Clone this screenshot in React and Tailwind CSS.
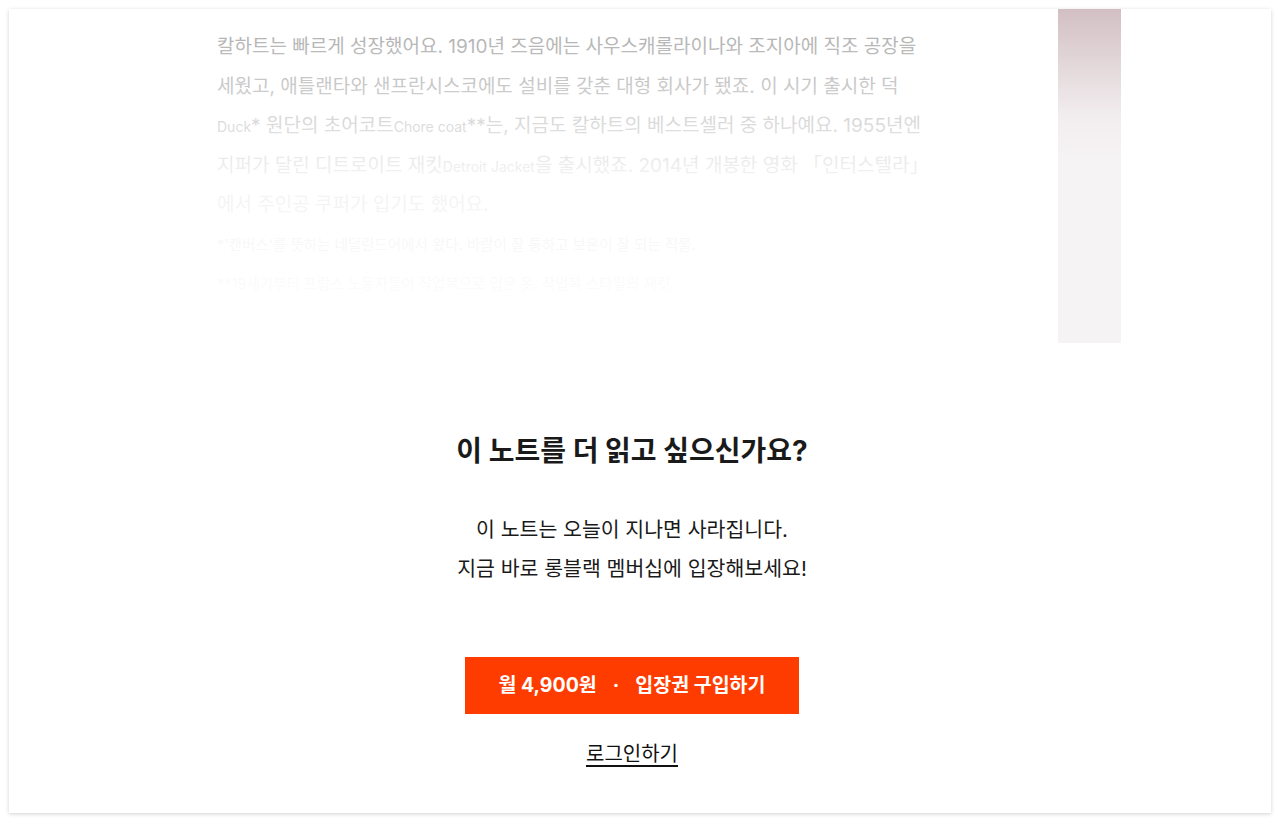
export default function App() {
  const font = "font-['Inter','Noto_Sans_CJK_KR',sans-serif]";
  return (
    <div className={`min-h-[822px] bg-white p-[9px] ${font}`}>
      <div className="h-[804px] bg-white shadow-[0_1px_4px_rgba(0,0,0,0.18)] flex flex-col">
        <div className="flex">
          <div className="relative ml-[208px] w-[712px] pt-[18px] text-[#a8a8a8]">
            <p className="text-[19px] leading-[39.5px] whitespace-nowrap">
              칼하트는 빠르게 성장했어요. 1910년 즈음에는 사우스캐롤라이나와 조지아에 직조 공장을<br />
              세웠고, 애틀랜타와 샌프란시스코에도 설비를 갖춘 대형 회사가 됐죠. 이 시기 출시한 덕<br />
              <span className="text-[14px] leading-none">Duck</span>* 원단의 초어코트<span className="text-[14px] leading-none">Chore coat</span>**는, 지금도 칼하트의 베스트셀러 중 하나예요. 1955년엔<br />
              지퍼가 달린 디트로이트 재킷<span className="text-[14px] leading-none">Detroit Jacket</span>을 출시했죠. 2014년 개봉한 영화 「인터스텔라」<br />
              에서 주인공 쿠퍼가 입기도 했어요.
            </p>
            <p className="text-[14.5px] leading-[39.5px] whitespace-nowrap">
              *'캔버스'를 뜻하는 네덜란드어에서 왔다. 바람이 잘 통하고 보온이 잘 되는 직물.
            </p>
            <p className="text-[14.5px] leading-[39.5px] whitespace-nowrap">
              **19세기부터 프랑스 노동자들이 작업복으로 입은 옷. 작업복 스타일의 재킷.
            </p>
            <div className="absolute inset-0 bg-gradient-to-b from-white/0 via-white/85 to-white" />
          </div>
          <div className="ml-[129px] w-[63px] h-[334px] bg-[linear-gradient(to_bottom,#d2bfc3_0%,#e8dfe1_22%,#f2eef0_33%,#f6f3f4_45%,#f6f3f4_100%)]" />
        </div>

        <div className="flex flex-col items-center pr-[16px]">
          <h2 className="mt-[90px] text-[28px] leading-[36px] font-bold text-[#1a1a1a]">
            이 노트를 더 읽고 싶으신가요?
          </h2>
          <p className="mt-[41px] text-[20.5px] leading-[39px] text-[#1a1a1a] text-center">
            이 노트는 오늘이 지나면 사라집니다.<br />
            지금 바로 롱블랙 멤버십에 입장해보세요!
          </p>
          <button className="mt-[69px] w-[334px] h-[57px] bg-[#ff3c00] text-white text-[19.5px] font-bold flex items-center justify-center">
            월 4,900원<span className="mx-[16px]">·</span>입장권 구입하기
          </button>
          <a href="#" className="mt-[28px] text-[20px] leading-[24px] text-[#111] underline underline-offset-[4px]">
            로그인하기
          </a>
        </div>
      </div>
    </div>
  );
}
